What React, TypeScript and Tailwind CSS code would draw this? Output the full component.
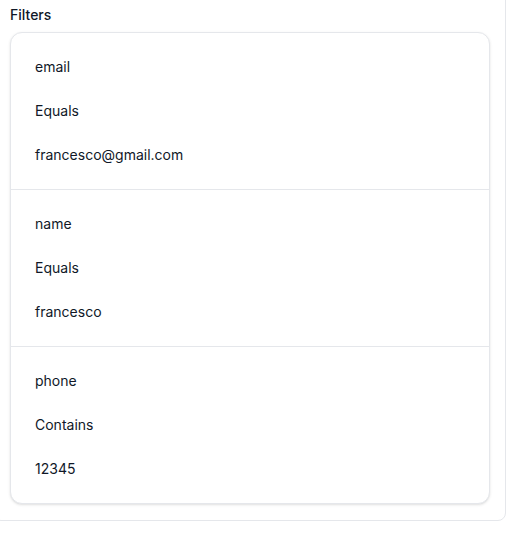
import React from "react";

const filters = [
  { field: "email", op: "Equals", value: "francesco@gmail.com" },
  { field: "name", op: "Equals", value: "francesco" },
  { field: "phone", op: "Contains", value: "12345" },
];

export default function App() {
  return (
    <div className="bg-white min-h-[552px] overflow-hidden" style={{ fontFamily: "Inter, 'Noto Sans', sans-serif" }}>
      <div className="ml-[-7px] mt-[-12px] w-[513px] rounded-lg border border-gray-200 pl-4 pr-[15px] pt-4 pb-4 bg-white">
        <div className="text-sm font-medium text-gray-900 leading-5">Filters</div>
        <div className="mt-[7px] rounded-xl border border-gray-200 shadow-sm bg-white divide-y divide-gray-200">
          {filters.map((f) => (
            <div key={f.field} className="px-6 py-6 flex flex-col gap-6 text-sm leading-5 text-gray-900">
              <div>{f.field}</div>
              <div>{f.op}</div>
              <div>{f.value}</div>
            </div>
          ))}
        </div>
      </div>
    </div>
  );
}
